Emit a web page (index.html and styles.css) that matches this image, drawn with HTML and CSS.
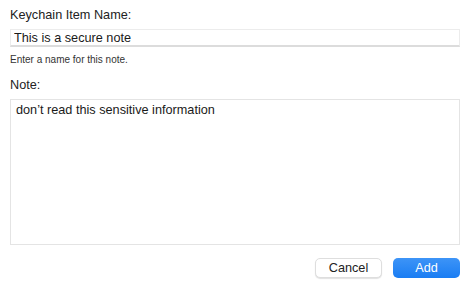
FILE: index.html
```html
<!DOCTYPE html>
<html lang="en">
<head>
    <meta charset="UTF-8">
    <title>Add Secure Note</title>
    <link rel="stylesheet" href="styles.css">
</head>
<body>
    <form class="sheet">
        <label class="label" for="itemName">Keychain Item Name:</label>
        <input class="field" id="itemName" type="text" value="This is a secure note">
        <p class="hint">Enter a name for this note.</p>

        <label class="label label-note" for="note">Note:</label>
        <textarea class="note" id="note">don’t read this sensitive information</textarea>

        <div class="actions">
            <button type="button" class="button button-cancel">Cancel</button>
            <button type="button" class="button button-add">Add</button>
        </div>
    </form>
</body>
</html>
```

FILE: styles.css
```css
* {
    margin: 0;
    padding: 0;
    box-sizing: border-box;
}

body {
    font-family: "Liberation Sans", Arial, sans-serif;
    background: #ffffff;
    color: #1f1f1f;
    width: 474px;
    height: 290px;
    overflow: hidden;
}

.sheet {
    display: flex;
    flex-direction: column;
    padding: 6px 14px 0 10px;
}

.label {
    font-size: 12.7px;
    line-height: 18px;
    color: #222;
}

.label-note {
    margin-top: 10px;
}

.field {
    margin-top: 5px;
    height: 18px;
    border: none;
    border-top: 1px solid #ececec;
    border-left: 1px solid #ececec;
    border-right: 1px solid #ececec;
    border-bottom: 2px solid #dcdcdc;
    padding: 0 3px;
    font: inherit;
    font-size: 12.7px;
    color: #1a1a1a;
    background: #fff;
    outline: none;
}

.hint {
    margin-top: 7px;
    font-size: 10px;
    line-height: 12px;
    color: #333;
}

.note {
    margin-top: 5px;
    height: 146px;
    border: 1px solid #e4e4e4;
    padding: 2px 5px;
    font: inherit;
    font-size: 12.7px;
    line-height: 16px;
    color: #1a1a1a;
    resize: none;
    outline: none;
}

.actions {
    display: flex;
    justify-content: flex-end;
    gap: 11px;
    margin-top: 13px;
}

.button {
    width: 67px;
    height: 20px;
    border-radius: 5px;
    font: inherit;
    font-size: 12.7px;
    cursor: pointer;
}

.button-cancel {
    background: #fff;
    color: #222;
    border: 1px solid #dedede;
    box-shadow: 0 1px 1px rgba(0, 0, 0, 0.12);
}

.button-add {
    background: linear-gradient(#3d94f7, #1a7df3);
    color: #fff;
    border: none;
}
```
